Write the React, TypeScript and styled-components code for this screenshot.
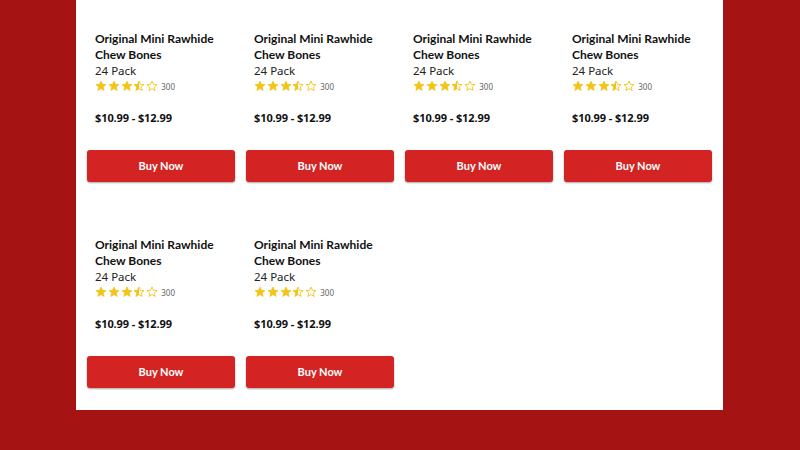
import React from "react";
import styled, { createGlobalStyle } from "styled-components";

const Global = createGlobalStyle`
  html, body { margin: 0; padding: 0; }
  body { background: #a61313; width: 800px; height: 450px; overflow: hidden; font-family: "Noto Sans", "Open Sans", sans-serif; }
`;

const Page = styled.div`
  width: 800px;
  height: 450px;
  display: flex;
  justify-content: center;
  align-items: flex-start;
`;

const Panel = styled.div`
  width: 647px;
  height: 410px;
  margin-left: -1px;
  background: #ffffff;
  box-sizing: border-box;
  padding: 31px 11px 0 11px;
  display: grid;
  grid-template-columns: repeat(4, 148px);
  column-gap: 11px;
  row-gap: 55px;
  align-content: start;
`;

const Card = styled.div`
  display: flex;
  flex-direction: column;
`;

const Info = styled.div`
  padding: 0 8px;
  display: flex;
  flex-direction: column;
`;

const Title = styled.div`
  font-family: Lato, "Noto Sans", sans-serif;
  font-size: 12px;
  font-weight: 700;
  line-height: 16px;
  color: #111;
`;

const Pack = styled.div`
  font-size: 11.5px;
  line-height: 15px;
  color: #222;
`;

const RatingRow = styled.div`
  display: flex;
  align-items: center;
  gap: 0.75px;
  height: 16px;
`;

const Count = styled.span`
  font-size: 8px;
  color: #666;
  margin-left: 2.5px;
`;

const Price = styled.div`
  font-family: "Noto Sans", sans-serif;
  font-size: 11px;
  font-weight: 700;
  letter-spacing: -0.1px;
  color: #111;
  line-height: 16px;
  margin-top: 16px;
`;

const BuyButton = styled.button`
  margin-top: 24px;
  width: 148px;
  height: 32px;
  padding: 0 0 2px 0;
  border: none;
  border-radius: 3px;
  background: #d42323;
  color: #fff;
  font-family: Lato, "Noto Sans", sans-serif;
  font-weight: 700;
  font-size: 11px;
  box-shadow: 0 1px 2px rgba(0, 0, 0, 0.35);
  cursor: pointer;
`;

const starPath =
  "M12 2l2.9 6.6 7.1.6-5.4 4.7 1.6 7-6.2-3.7-6.2 3.7 1.6-7L2 9.2l7.1-.6z";

const Star: React.FC<{ kind: "full" | "half" | "empty" }> = ({ kind }) => (
  <svg width="12" height="12" viewBox="0 0 24 24">
    {kind === "half" && (
      <defs>
        <clipPath id="halfclip">
          <rect x="0" y="0" width="12" height="24" />
        </clipPath>
      </defs>
    )}
    {kind === "full" && <path d={starPath} fill="#f2c417" stroke="#f2c417" strokeWidth="1.5" strokeLinejoin="round" />}
    {kind === "half" && (
      <>
        <path d={starPath} fill="#f2c417" clipPath="url(#halfclip)" />
        <path d={starPath} fill="none" stroke="#f2c417" strokeWidth="1.8" strokeLinejoin="round" />
      </>
    )}
    {kind === "empty" && <path d={starPath} fill="none" stroke="#f2c417" strokeWidth="1.8" strokeLinejoin="round" />}
  </svg>
);

const Product: React.FC = () => (
  <Card>
    <Info>
      <Title>Original Mini Rawhide</Title>
      <Title>Chew Bones</Title>
      <Pack>24 Pack</Pack>
      <RatingRow>
        <Star kind="full" />
        <Star kind="full" />
        <Star kind="full" />
        <Star kind="half" />
        <Star kind="empty" />
        <Count>300</Count>
      </RatingRow>
      <Price>$10.99 - $12.99</Price>
    </Info>
    <BuyButton>Buy Now</BuyButton>
  </Card>
);

export default function App() {
  return (
    <>
      <Global />
      <Page>
        <Panel>
          {Array.from({ length: 6 }).map((_, i) => (
            <Product key={i} />
          ))}
        </Panel>
      </Page>
    </>
  );
}
